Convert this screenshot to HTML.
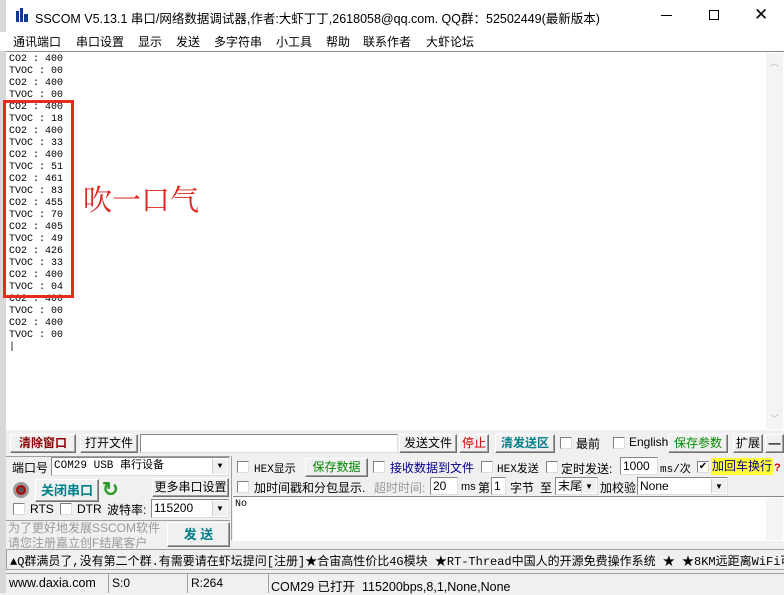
<!DOCTYPE html>
<html><head><meta charset="utf-8"><style>
*{margin:0;padding:0;box-sizing:border-box}
body{width:784px;height:593px;background:#f0f0f0;position:relative;overflow:hidden;font-family:"Liberation Sans","Noto Sans CJK SC",sans-serif;font-size:12px;color:#000}
.a{position:absolute;white-space:nowrap}
.btn{position:absolute;background:#f0f0f0;border:1px solid;border-color:#fff #707070 #707070 #fff;box-shadow:inset -1px -1px 0 #a0a0a0;text-align:center;font-size:12px;line-height:17px}
.cb{position:absolute;width:12px;height:12px;background:#fff;border:1px solid #808080;border-right-color:#ddd;border-bottom-color:#ddd}
.inp{position:absolute;background:#fff;border:1px solid #888;border-right-color:#ddd;border-bottom-color:#ddd;font-size:12px;line-height:16px;padding-left:2px}
.dd{position:absolute;right:1px;top:1px;bottom:1px;width:15px;background:#f0f0f0;border-left:1px solid #ccc;font-size:8px;text-align:center;line-height:16px}
.mono{font-family:"Liberation Mono","Noto Sans CJK SC",monospace}
</style></head><body>
<div class="a" style="left:0;top:0;width:784px;height:32px;background:#fff"></div>
<div class="a" style="left:0;top:0;width:6px;height:593px;background:#d8d8d8"></div>
<svg class="a" style="left:15px;top:8px" width="14" height="14"><rect x="1" y="3" width="3" height="11" fill="#123a8a"/><rect x="5" y="0" width="3" height="14" fill="#123a8a"/><rect x="9" y="6" width="4" height="8" fill="#123a8a"/></svg>
<div class="a" style="left:35px;top:8px;font-size:12.5px">SSCOM V5.13.1 串口/网络数据调试器,作者:大虾丁丁,2618058@qq.com. QQ群：52502449(最新版本)</div>
<div class="a" style="left:661px;top:15px;width:11px;height:1px;background:#000"></div>
<div class="a" style="left:709px;top:10px;width:10px;height:10px;border:1px solid #000"></div>
<div class="a" style="left:754px;top:5px;font-size:17px;line-height:20px">✕</div>
<div class="a" style="left:0;top:32px;width:784px;height:19px;background:#fff"></div>
<div class="a" style="top:33px;left:13px">通讯端口</div>
<div class="a" style="top:33px;left:76px">串口设置</div>
<div class="a" style="top:33px;left:138px">显示</div>
<div class="a" style="top:33px;left:176px">发送</div>
<div class="a" style="top:33px;left:214px">多字符串</div>
<div class="a" style="top:33px;left:276px">小工具</div>
<div class="a" style="top:33px;left:326px">帮助</div>
<div class="a" style="top:33px;left:363px">联系作者</div>
<div class="a" style="top:33px;left:426px">大虾论坛</div>
<div class="a" style="left:6px;top:51px;width:778px;height:379px;background:#fff;border-top:1px solid #888"></div>
<div class="a" style="left:766px;top:53px;width:17px;height:376px;background:#f4f4f4"></div>
<div class="a" style="left:770px;top:56px;font-size:9px;color:#bbb">︿</div>
<div class="a" style="left:770px;top:412px;font-size:9px;color:#bbb">﹀</div>
<div class="a mono" style="left:9px;top:54px;font-size:10px;line-height:12px;white-space:pre">CO2 : 400
TVOC : 00
CO2 : 400
TVOC : 00
CO2 : 400
TVOC : 18
CO2 : 400
TVOC : 33
CO2 : 400
TVOC : 51
CO2 : 461
TVOC : 83
CO2 : 455
TVOC : 70
CO2 : 405
TVOC : 49
CO2 : 426
TVOC : 33
CO2 : 400
TVOC : 04
CO2 : 400
TVOC : 00
CO2 : 400
TVOC : 00
|</div>
<div class="a" style="left:3px;top:100px;width:71px;height:198px;border:3px solid #e52a1e"></div>
<div class="a" style="left:83px;top:181px;font-size:29px;color:#d9251d;font-family:'Noto Serif CJK SC',serif;line-height:36px">吹一口气</div>

<div class="btn" style="left:10px;top:434px;width:66px;height:19px;color:#8b0000;font-weight:bold">清除窗口</div>
<div class="btn" style="left:80px;top:434px;width:58px;height:19px">打开文件</div>
<div class="inp" style="left:140px;top:434px;width:258px;height:19px"></div>
<div class="btn" style="left:399px;top:434px;width:58px;height:19px">发送文件</div>
<div class="btn" style="left:459px;top:434px;width:30px;height:19px;color:#c00">停止</div>
<div class="btn" style="left:495px;top:434px;width:60px;height:19px;color:#00808a;font-weight:bold">清发送区</div>
<div class="cb" style="left:560px;top:437px"></div><div class="a" style="left:576px;top:435px">最前</div>
<div class="cb" style="left:613px;top:437px"></div><div class="a" style="left:629px;top:435px">English</div>
<div class="btn" style="left:668px;top:434px;width:60px;height:19px;color:#080">保存参数</div>
<div class="btn" style="left:733px;top:434px;width:30px;height:19px">扩展</div>
<div class="btn" style="left:765px;top:434px;width:19px;height:19px;font-weight:bold">—</div>

<div class="a" style="left:6px;top:456px;width:224px;height:1px;background:#a0a0a0"></div>
<div class="a" style="left:12px;top:459px">端口号</div>
<div class="inp mono" style="left:51px;top:457px;width:178px;height:19px;font-size:11px">COM29 USB 串行设备<div class="dd">▼</div></div>
<div class="a" style="left:231px;top:456px;width:1px;height:84px;background:#a0a0a0"></div>
<div class="cb" style="left:237px;top:461px"></div><div class="a mono" style="left:254px;top:460px;font-size:11px">HEX显示</div>
<div class="btn" style="left:305px;top:458px;width:63px;height:19px;color:#080">保存数据</div>
<div class="cb" style="left:373px;top:461px"></div><div class="a" style="left:390px;top:459px;color:#000080">接收数据到文件</div>
<div class="cb" style="left:481px;top:461px"></div><div class="a mono" style="left:497px;top:460px;font-size:11px">HEX发送</div>
<div class="cb" style="left:546px;top:461px"></div><div class="a" style="left:561px;top:460px">定时发送:</div>
<div class="inp" style="left:620px;top:457px;width:38px;height:18px">1000</div>
<div class="a mono" style="left:660px;top:460px;font-size:11px">ms/次</div>
<div class="cb" style="left:697px;top:461px;font-size:10px;line-height:10px;text-align:center">✔</div>
<div class="a" style="left:711px;top:458px;width:62px;height:17px;background:#ffff33;color:#000080;padding-left:1px;line-height:17px">加回车换行</div>
<div class="a" style="left:774px;top:462px;color:#c00;font-weight:bold;font-size:11px">?</div>

<div class="a" style="left:13px;top:482px;width:16px;height:16px;border-radius:50%;background:#555;border:3px solid #999;box-shadow:inset 0 0 0 2px #b00"></div>
<div class="btn" style="left:35px;top:479px;width:64px;height:23px;line-height:21px;color:#00808a;font-weight:bold;font-size:13px">关闭串口</div>
<div class="a" style="left:102px;top:477px;color:#2a9a2a;font-size:20px;font-weight:bold">↻</div>
<div class="btn" style="left:152px;top:478px;width:77px;height:19px">更多串口设置</div>
<div class="cb" style="left:237px;top:481px"></div><div class="a" style="left:254px;top:479px">加时间戳和分包显示.</div>
<div class="a" style="left:374px;top:479px;color:#999">超时时间:</div>
<div class="inp" style="left:430px;top:477px;width:28px;height:18px">20</div>
<div class="a" style="left:461px;top:481px;font-size:11px">ms</div>
<div class="a" style="left:478px;top:479px">第</div>
<div class="inp" style="left:491px;top:477px;width:15px;height:18px">1</div>
<div class="a" style="left:510px;top:479px">字节</div><div class="a" style="left:540px;top:479px">至</div>
<div class="inp" style="left:555px;top:477px;width:43px;height:18px">末尾<div class="dd">▼</div></div>
<div class="a" style="left:600px;top:479px">加校验</div>
<div class="inp" style="left:637px;top:477px;width:91px;height:18px">None<div class="dd">▼</div></div>

<div class="cb" style="left:13px;top:503px"></div><div class="a" style="left:30px;top:502px">RTS</div>
<div class="cb" style="left:60px;top:503px"></div><div class="a" style="left:77px;top:502px">DTR</div>
<div class="a" style="left:107px;top:501px">波特率:</div>
<div class="inp" style="left:151px;top:499px;width:78px;height:19px">115200<div class="dd">▼</div></div>
<div class="a" style="left:233px;top:496px;width:551px;height:45px;background:#fff;border-top:1px solid #888"></div>
<div class="a mono" style="left:235px;top:499px;font-size:10px">No</div>
<div class="a" style="left:766px;top:498px;width:17px;height:42px;background:#f4f4f4"></div>
<div class="a" style="left:6px;top:520px;width:224px;height:1px;background:#a0a0a0"></div>
<div class="a" style="left:8px;top:521px;color:#999;line-height:15px">为了更好地发展SSCOM软件<br>请您注册嘉立创F结尾客户</div>
<div class="btn" style="left:167px;top:522px;width:63px;height:25px;line-height:23px;color:#00808a;font-weight:bold;font-size:13px">发 送</div>
<div class="a" style="left:6px;top:549px;width:778px;height:21px;border:1px solid #a0a0a0;border-right:none;background:#f0f0f0;overflow:hidden">
<div class="a mono" style="left:3px;top:2px;font-size:12px">▲Q群满员了,没有第二个群.有需要请在虾坛提问[注册]★合宙高性价比4G模块 ★RT-Thread中国人的开源免费操作系统 ★ ★8KM远距离WiFi可自组网</div></div>
<div class="a" style="left:6px;top:573px;width:778px;height:20px;border-top:1px solid #a0a0a0"></div>
<div class="a" style="left:9px;top:576px;font-size:12.5px">www.daxia.com</div>
<div class="a" style="left:108px;top:574px;width:1px;height:19px;background:#a0a0a0"></div>
<div class="a" style="left:112px;top:576px">S:0</div>
<div class="a" style="left:187px;top:574px;width:1px;height:19px;background:#a0a0a0"></div>
<div class="a" style="left:191px;top:576px">R:264</div>
<div class="a" style="left:268px;top:574px;width:1px;height:19px;background:#a0a0a0"></div>
<div class="a" style="left:271px;top:576px;font-size:12.5px">COM29 已打开&nbsp; 115200bps,8,1,None,None</div>
</body></html>
